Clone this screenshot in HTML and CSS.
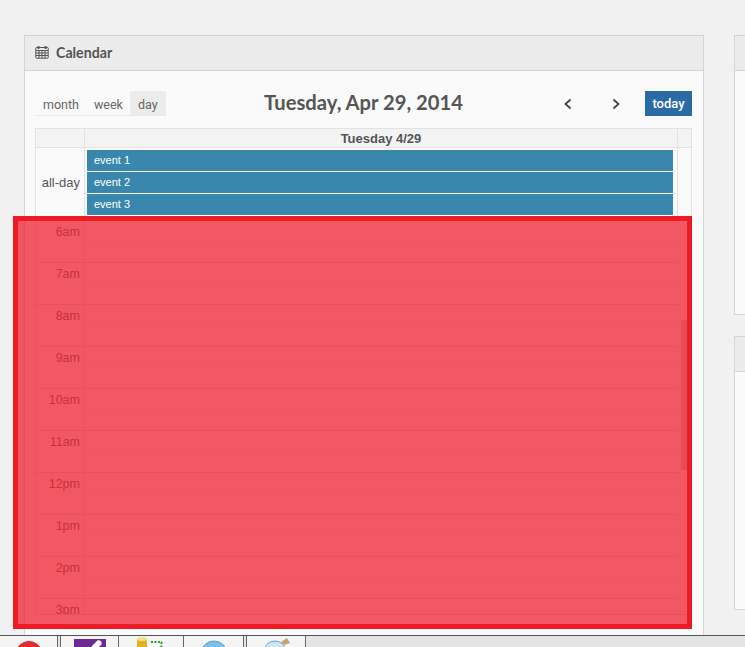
FILE: index.html
```html
<!DOCTYPE html>
<html lang="en">
<head>
<meta charset="utf-8">
<title>Calendar</title>
<link rel="stylesheet" href="styles.css">
</head>
<body>
<div class="desk">
  <main class="page">
    <section class="panel panel-main">
      <header class="panel-head">
        <svg class="cal-icon" width="14" height="14" viewBox="0 0 14 14" aria-hidden="true">
          <path d="M1.500 2.500h11a.7.7 0 0 1 .7.7v9.300a.7.7 0 0 1-.7.7h-11a.7.7 0 0 1-.7-.7V3.200a.7.7 0 0 1 .7-.7z" fill="none" stroke="#555" stroke-width="1"/>
          <path d="M1 5.500h12M1 8h12M1 10.500h12M4 5.500V13M7 5.500V13M10 5.500V13" fill="none" stroke="#555" stroke-width="1"/>
          <path d="M3.500 1v3M10.500 1v3" stroke="#555" stroke-width="1.800" fill="none"/>
        </svg>
        <h2 class="panel-title">Calendar</h2>
      </header>
      <div class="panel-body">
        <div class="toolbar">
          <div class="views">
            <span class="view">month</span>
            <span class="view view-week">week</span>
            <span class="view view-on">day</span>
          </div>
          <h1 class="date">Tuesday, Apr 29, 2014</h1>
          <div class="nav">
            <svg class="chev" width="10" height="12" viewBox="0 0 10 12" aria-hidden="true"><path d="M7.500 1.500 2.500 6l5 4.500" fill="none" stroke="#444" stroke-width="1.800"/></svg>
            <svg class="chev" width="10" height="12" viewBox="0 0 10 12" aria-hidden="true"><path d="M2.500 1.500 7.500 6l-5 4.500" fill="none" stroke="#444" stroke-width="1.800"/></svg>
            <span class="today">today</span>
          </div>
        </div>
        <div class="cal">
          <div class="cal-head">
            <div class="gutter"></div>
            <div class="day-name">Tuesday 4/29</div>
            <div class="scroll-cap"></div>
          </div>
          <div class="allday">
            <div class="gutter allday-label">all-day</div>
            <div class="events">
              <div class="event">event 1</div>
              <div class="event">event 2</div>
              <div class="event">event 3</div>
            </div>
            <div class="scroll-cap"></div>
          </div>
          <div class="times">
            <div class="hour"><span class="gutter hour-label">6am</span></div>
            <div class="hour"><span class="gutter hour-label">7am</span></div>
            <div class="hour"><span class="gutter hour-label">8am</span></div>
            <div class="hour"><span class="gutter hour-label">9am</span></div>
            <div class="hour"><span class="gutter hour-label">10am</span></div>
            <div class="hour"><span class="gutter hour-label">11am</span></div>
            <div class="hour"><span class="gutter hour-label">12pm</span></div>
            <div class="hour"><span class="gutter hour-label">1pm</span></div>
            <div class="hour"><span class="gutter hour-label">2pm</span></div>
            <div class="hour"><span class="gutter hour-label">3pm</span></div>
            <div class="thumb"></div>
          </div>
        </div>
      </div>
    </section>
    <aside class="side">
      <section class="panel panel-top"><div class="panel-head"></div></section>
      <section class="panel panel-bottom"><div class="panel-head"></div></section>
    </aside>
    <div class="redact"></div>
  </main>
  <footer class="taskbar">
    <div class="task task-first">
      <svg width="30" height="12" viewBox="0 0 30 12" aria-hidden="true"><circle cx="15" cy="19" r="13" fill="#e02b30"/></svg>
    </div>
    <div class="task task-second">
      <svg width="32" height="12" viewBox="0 0 32 12" aria-hidden="true"><rect y="4" width="32" height="8" fill="#6b2a94"/><path d="M17 12l5-5a3 3 0 1 1 4 4l-1 1z" fill="#fff"/></svg>
    </div>
    <div class="task task-third">
      <svg width="30" height="12" viewBox="0 0 30 12" aria-hidden="true"><rect x="1" y="4" width="10" height="8" fill="#e3b21c"/><ellipse cx="6" cy="4" rx="5" ry="2" fill="#f3e08a"/><path d="M15 7h11M25.500 7v5" stroke="#3c9a3c" stroke-width="2" stroke-dasharray="2 1.500" fill="none"/></svg>
    </div>
    <div class="task task-fourth">
      <svg width="30" height="12" viewBox="0 0 30 12" aria-hidden="true"><circle cx="15" cy="19" r="13" fill="#7cc0ea" stroke="#5d9ccb"/></svg>
    </div>
    <div class="task task-fifth">
      <svg width="32" height="12" viewBox="0 0 32 12" aria-hidden="true"><circle cx="15" cy="17" r="11" fill="#cfe6f5" stroke="#6fa6cc"/><path d="M21 7l6-4 3 5-6 2z" fill="#c9a06f"/></svg>
    </div>
  </footer>
</div>
</body>
</html>
```

FILE: styles.css
```css
* { box-sizing: border-box; }

html, body {
  margin: 0;
  height: 100%;
  overflow: hidden;
}

body {
  background: #f1f1f1;
  font-family: "Liberation Sans", Arial, sans-serif;
  color: #555;
}

.desk {
  height: 647px;
  display: flex;
  flex-direction: column;
}

.page {
  position: relative;
  flex: 1;
  min-height: 0;
  display: flex;
  gap: 30px;
  padding: 35px 0 0 24px;
  overflow: hidden;
}

.panel {
  background: #fafafa;
  border: 1px solid #d5d5d5;
}

.panel-main {
  flex: 0 0 680px;
  margin-bottom: -20px;
}

.panel-head {
  height: 35px;
  background: #ececec;
  border-bottom: 1px solid #d5d5d5;
  display: flex;
  align-items: center;
  gap: 7px;
  padding: 0 10px 2px;
}

.panel-title {
  margin: 0;
  font: 700 14.200px Lato, sans-serif;
  color: #555;
}

.panel-body {
  padding: 20px 11px 0 10px;
}

.toolbar {
  height: 37px;
  display: grid;
  grid-template-columns: 1fr auto 1fr;
  align-items: start;
}

.views {
  display: flex;
  justify-self: start;
  height: 25px;
  border-bottom: 1px solid #e9e9e9;
  font: 12.500px Roboto, sans-serif;
  color: #666;
}

.view {
  display: flex;
  align-items: center;
  padding: 2px 8px 0;
}

.view-week {
  margin-left: -1px;
}

.view-on {
  margin-left: -1px;
  background: #ececec;
}

.date {
  margin: -2px 0 0;
  font: 700 20.200px/26px Lato, sans-serif;
  color: #555;
}

.nav {
  display: flex;
  justify-self: end;
  align-items: center;
  height: 25px;
}

.chev {
  margin-right: 38px;
}

.chev + .chev {
  margin-right: 24px;
}

.today {
  width: 47px;
  height: 25px;
  background: #2a6aa5;
  color: #fff;
  font: 500 13px/25px Roboto, sans-serif;
  text-align: center;
}

.cal {
  border: 1px solid #e2e2e2;
  width: 657px;
  height: 487px;
  overflow: hidden;
}

.gutter {
  flex: 0 0 49px;
  width: 49px;
  border-right: 1px solid #e2e2e2;
}

.scroll-cap {
  flex: 0 0 14px;
  border-left: 1px solid #e2e2e2;
}

.cal-head {
  display: flex;
  height: 19px;
  background: #f3f3f3;
  border-bottom: 1px solid #e2e2e2;
}

.day-name {
  flex: 1;
  text-align: center;
  font: 700 13px/19px "Liberation Sans", Arial, sans-serif;
  color: #555;
}

.allday {
  display: flex;
  height: 71px;
}

.allday-label {
  font: 13px/70px "Liberation Sans", Arial, sans-serif;
  text-align: right;
  padding-right: 4px;
  color: #555;
}

.events {
  flex: 1;
  padding: 2px 4px 0 2px;
}

.event {
  height: 21px;
  margin-bottom: 1px;
  padding-left: 7px;
  background: #3a87ad;
  color: #fff;
  font: 11px/21px "Liberation Sans", Arial, sans-serif;
}

.times {
  position: relative;
  height: 395px;
  padding: 1px 13px 0 0;
  overflow: hidden;
  border-top: 1px solid #e2e2e2;
}

.hour {
  height: 42px;
  display: flex;
  border-bottom: 1px solid #e2e2e2;
  background: linear-gradient(#0000 20px, #eee 20px, #eee 21px, #0000 21px);
}

.hour-label {
  height: 41px;
  font: 12.500px/23px "Liberation Sans", Arial, sans-serif;
  text-align: right;
  padding-right: 4px;
  color: #6a6a6a;
  background: #fafafa;
}

.thumb {
  position: absolute;
  right: 4px;
  top: 100px;
  width: 6px;
  height: 150px;
  background: #d0d0d0;
}

.side {
  flex: 1;
  display: flex;
  flex-direction: column;
  gap: 21px;
}

.panel-top {
  height: 280px;
  border-right: 0;
}

.panel-bottom {
  height: 274px;
  border-right: 0;
}

.redact {
  position: absolute;
  left: 13px;
  top: 216px;
  width: 679px;
  height: 413px;
  background: rgba(237, 28, 44, 0.73);
  border: 5px solid #ed1c24;
}

.taskbar {
  flex: 0 0 12px;
  display: flex;
  align-items: flex-end;
  background: #e4e4e4;
  border-top: 1px solid #555;
  overflow: hidden;
}

.task {
  height: 11px;
  background: #f4f4f4;
  border-right: 1px solid #666;
  display: flex;
  justify-content: center;
  overflow: hidden;
}

.task svg {
  margin-top: -1px;
  flex: none;
}

.task-first {
  flex: 0 0 58px;
  margin-right: 2px;
}

.task-second {
  flex: 0 0 59px;
  border-left: 1px solid #666;
}

.task-third {
  flex: 0 0 65px;
}

.task-fourth {
  flex: 0 0 60px;
  margin-right: 2px;
}

.task-fifth {
  flex: 0 0 60px;
  border-left: 1px solid #666;
}
```
